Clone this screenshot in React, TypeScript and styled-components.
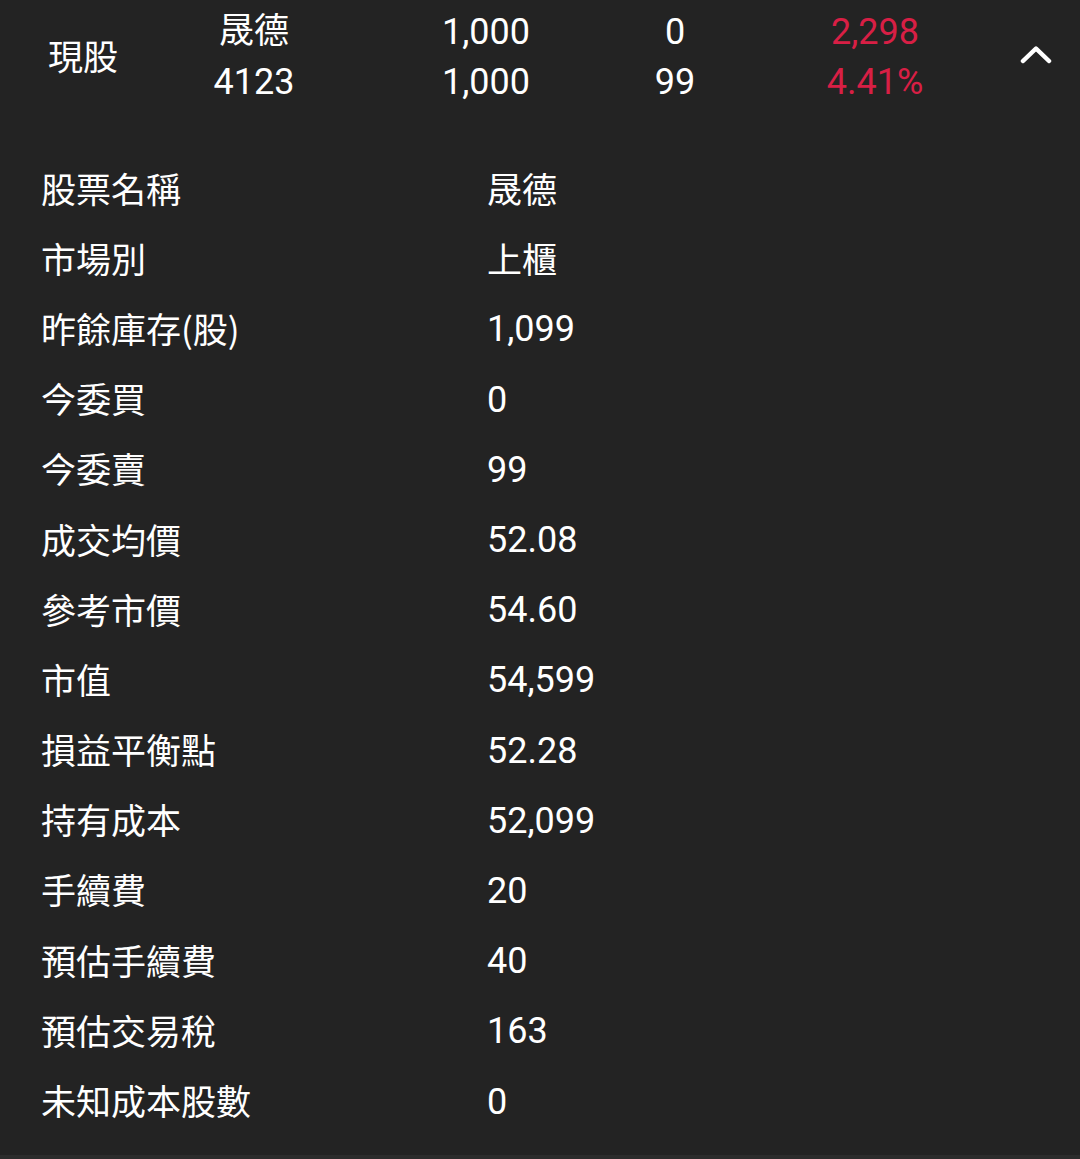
import React from "react";
import styled, { createGlobalStyle } from "styled-components";

const Global = createGlobalStyle`
  html, body { margin: 0; padding: 0; background: #232323; }
  body { font-family: Roboto, "Noto Sans CJK TC", sans-serif; color: #ffffff; }
`;

const Page = styled.div`
  width: 1080px;
  min-height: 1159px;
  background: #232323;
  box-sizing: border-box;
  border-bottom: 4px solid #2c2c2c;
  display: flex;
  flex-direction: column;
`;

const Header = styled.div`
  display: grid;
  grid-template-columns: 126px 160px 304px 74px 300px 48px;
  padding: 7px 20px 0 48px;
  height: 152px;
  box-sizing: border-box;
`;

const Cell = styled.div<{ $align?: "start" | "center"; $red?: boolean; $padLeft?: number }>`
  display: flex;
  flex-direction: column;
  align-items: ${(p) => (p.$align === "start" ? "flex-start" : "center")};
  padding-left: ${(p) => p.$padLeft ?? 0}px;
  color: ${(p) => (p.$red ? "#d81f45" : "#ffffff")};
`;

const Line = styled.span<{ $cjk?: boolean }>`
  display: block;
  height: 50px;
  line-height: 50px;
  font-size: ${(p) => (p.$cjk ? 35 : 36)}px;
  white-space: nowrap;
`;

const Kind = styled.div`
  height: 100px;
  padding-bottom: 5px;
  box-sizing: border-box;
  display: flex;
  align-items: center;
  font-size: 35px;
  line-height: 1;
  font-family: "Noto Sans CJK TC", sans-serif;
`;

const Toggle = styled.div`
  height: 100px;
  padding-bottom: 4px;
  box-sizing: border-box;
  display: flex;
  align-items: center;
  justify-content: center;
`;

const List = styled.div`
  display: flex;
  flex-direction: column;
  padding: 0 0 0 41px;
`;

const Row = styled.div`
  display: grid;
  grid-template-columns: 446px 1fr;
  height: 70.2px;
  align-items: center;
`;

const Label = styled.div`
  font-family: "Noto Sans CJK TC", Roboto, sans-serif;
  font-size: 35px;
  white-space: nowrap;
`;

const Value = styled.div<{ $cjk?: boolean }>`
  font-family: Roboto, "Noto Sans CJK TC", sans-serif;
  font-size: ${(p) => (p.$cjk ? 35 : 36)}px;
  padding-top: ${(p) => (p.$cjk ? 0 : 4)}px;
`;

const rows: [string, string, boolean?][] = [
  ["股票名稱", "晟德", true],
  ["市場別", "上櫃", true],
  ["昨餘庫存(股)", "1,099"],
  ["今委買", "0"],
  ["今委賣", "99"],
  ["成交均價", "52.08"],
  ["參考市價", "54.60"],
  ["市值", "54,599"],
  ["損益平衡點", "52.28"],
  ["持有成本", "52,099"],
  ["手續費", "20"],
  ["預估手續費", "40"],
  ["預估交易稅", "163"],
  ["未知成本股數", "0"],
];

export default function App() {
  return (
    <>
      <Global />
      <Page>
        <Header>
          <Cell $align="start">
            <Kind>現股</Kind>
          </Cell>
          <Cell>
            <Line $cjk>晟德</Line>
            <Line>4123</Line>
          </Cell>
          <Cell>
            <Line>1,000</Line>
            <Line>1,000</Line>
          </Cell>
          <Cell>
            <Line>0</Line>
            <Line>99</Line>
          </Cell>
          <Cell $red $padLeft={26}>
            <Line>2,298</Line>
            <Line>4.41%</Line>
          </Cell>
          <Toggle>
            <svg width="32" height="20" viewBox="0 0 32 20" fill="none">
              <path d="M3 16 L16 3.5 L29 16" stroke="#ffffff" strokeWidth="4.5" strokeLinecap="round" strokeLinejoin="round" />
            </svg>
          </Toggle>
        </Header>
        <List>
          {rows.map(([l, v, cjk]) => (
            <Row key={l}>
              <Label>{l}</Label>
              <Value $cjk={cjk}>{v}</Value>
            </Row>
          ))}
        </List>
      </Page>
    </>
  );
}
